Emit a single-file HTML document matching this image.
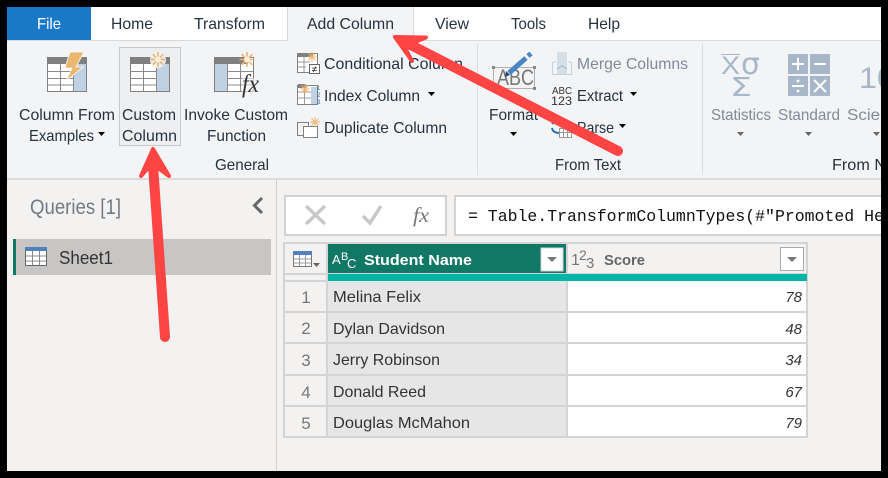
<!DOCTYPE html>
<html><head><meta charset="utf-8"><title>Add Column</title>
<style>
html,body{margin:0;padding:0;background:#000}
svg{display:block}
text{font-family:"Liberation Sans",sans-serif;font-size:16px;fill:#25323f}
.g{fill:#7f8b99}
.m{font-family:"Liberation Mono",monospace;font-size:16.500px;fill:#111}
.n{font-size:17px;fill:#777;text-anchor:middle}
.c{font-size:16px;fill:#333}
.s{font-size:15px;font-style:italic;fill:#333;text-anchor:end}
.fx{font-family:"Liberation Serif",serif;font-style:italic}
</style></head><body>
<svg xmlns="http://www.w3.org/2000/svg" width="888" height="478" viewBox="0 0 888 478">
<defs>
<clipPath id="pg"><rect x="7" y="7" width="874" height="464"/></clipPath>
</defs>
<rect width="888" height="478" fill="#000"/>
<g clip-path="url(#pg)">
<!-- tab bar -->
<rect x="7" y="7" width="874" height="34" fill="#fff"/>
<rect x="7" y="7" width="84" height="33" fill="#1a78c8"/>
<rect x="7" y="41" width="874" height="138" fill="#f3f4f6"/>
<rect x="7" y="40" width="874" height="1" fill="#d8d8d8"/>
<rect x="287" y="7" width="127" height="34.500" fill="#f3f4f6"/>
<rect x="287" y="7" width="1" height="34" fill="#d8d8d8"/>
<rect x="413" y="7" width="1" height="34" fill="#d8d8d8"/>
<text x="37" y="29" textLength="24" lengthAdjust="spacingAndGlyphs" style="fill:#fff">File</text>
<text x="111" y="29" textLength="42" lengthAdjust="spacingAndGlyphs">Home</text>
<text x="194" y="29" textLength="71" lengthAdjust="spacingAndGlyphs">Transform</text>
<text x="307" y="29" textLength="87" lengthAdjust="spacingAndGlyphs">Add Column</text>
<text x="435" y="29" textLength="34" lengthAdjust="spacingAndGlyphs">View</text>
<text x="511" y="29" textLength="35" lengthAdjust="spacingAndGlyphs">Tools</text>
<text x="588" y="29" textLength="32" lengthAdjust="spacingAndGlyphs">Help</text>

<!-- ribbon -->
<rect x="119.500" y="47.500" width="61" height="98" fill="#eeeff1" stroke="#c8c8c8"/>
<rect x="477" y="44" width="1" height="131" fill="#dcdcdc"/>
<rect x="702" y="44" width="1" height="131" fill="#dcdcdc"/>
<rect x="7" y="178" width="874" height="2" fill="#dcdcdc"/>

<!-- Column from examples icon -->
<g>
<rect x="47.500" y="57.500" width="39" height="34" fill="#fff" stroke="#808080"/>
<rect x="47" y="57" width="40" height="7" fill="#7f7f7f"/>
<rect x="74" y="64" width="12" height="27" fill="#bfd1e3"/>
<path d="M47 71.500H74M47 78.500H74M47 85H74M60.500 64V91M73.500 64V91" stroke="#8a8a8a" fill="none"/>
<path d="M70 52H84L76 67H83L66 81L72 68H65Z" fill="#eab76f" stroke="#fff" stroke-width=".8"/>
</g>
<!-- Custom column icon -->
<g>
<rect x="130.500" y="57.500" width="39" height="34" fill="#fff" stroke="#808080"/>
<rect x="130" y="57" width="40" height="7" fill="#7f7f7f"/>
<rect x="157" y="64" width="12" height="27" fill="#bfd1e3"/>
<path d="M130 71.500H157M130 78.500H157M130 85H157M143.500 64V91M156.500 64V91" stroke="#8a8a8a" fill="none"/>
<circle cx="158" cy="60" r="8" fill="#f3f4f6" opacity=".9"/>
<path d="M158 52V67M150.500 59.500H165.500M152.700 54.200L163.300 64.800M163.300 54.200L152.700 64.800" stroke="#efb474" stroke-width="1.600"/>
<circle cx="158" cy="59.500" r="3" fill="#fbeeda"/>
</g>
<!-- Invoke icon -->
<g>
<rect x="214.500" y="57.500" width="39" height="34" fill="#fff" stroke="#808080"/>
<rect x="214" y="57" width="34" height="7" fill="#7f7f7f"/>
<rect x="215" y="64" width="12" height="27" fill="#bfd1e3"/>
<path d="M227 71.500H253M227 78.500H253M227 85H253M227.500 64V91M240.500 64V91" stroke="#8a8a8a" fill="none"/>
<path d="M247 52V67M239.500 59.500H254.500M241.700 54.200L252.300 64.800M252.300 54.200L241.700 64.800" stroke="#efb474" stroke-width="1.600"/>
<circle cx="247" cy="59.500" r="3" fill="#fbeeda"/>
<rect x="242" y="78" width="18" height="20" fill="#f3f4f6" opacity=".6"/>
<text class="fx" x="242" y="92" style="font-size:25px;fill:#333" textLength="17" lengthAdjust="spacingAndGlyphs">fx</text>
</g>
<text x="19" y="120" textLength="96" lengthAdjust="spacingAndGlyphs">Column From</text>
<text x="29" y="141" textLength="65" lengthAdjust="spacingAndGlyphs">Examples</text>
<path d="M98 132H105L101.500 136Z" fill="#000"/>
<text x="122" y="120" textLength="54" lengthAdjust="spacingAndGlyphs">Custom</text>
<text x="122" y="141" textLength="55" lengthAdjust="spacingAndGlyphs">Column</text>
<text x="184" y="120" textLength="104" lengthAdjust="spacingAndGlyphs">Invoke Custom</text>
<text x="207" y="141" textLength="59" lengthAdjust="spacingAndGlyphs">Function</text>
<text x="215" y="170" textLength="54" lengthAdjust="spacingAndGlyphs">General</text>

<!-- small icons -->
<g>
<rect x="297.500" y="53.500" width="20" height="19" fill="#fff" stroke="#808080"/>
<rect x="297" y="53" width="16" height="4" fill="#7f7f7f"/>
<path d="M298 62H310M298 67H306M304 57V72" stroke="#9a9a9a" fill="none"/>
<path d="M312 52V62M307 57H317M308.500 53.500L315.500 60.500M315.500 53.500L308.500 60.500" stroke="#efb474"/>
<rect x="309.500" y="64.500" width="10" height="9" fill="#fff" stroke="#666"/>
<path d="M312 68H317M312 70.500H317M316 66.500L313 72" stroke="#333" stroke-width=".8" fill="none"/>

<rect x="297.500" y="85.500" width="20" height="19" fill="#fff" stroke="#808080"/>
<rect x="298" y="84" width="8" height="4" fill="#7f7f7f"/>
<rect x="311" y="87" width="6" height="17" fill="#bfd1e3"/>
<path d="M298 92H311M298 98H311M304.500 90V104" stroke="#9a9a9a" fill="none"/>
<path d="M305 84V94M300 89H310M301.500 85.500L308.500 92.500M308.500 85.500L301.500 92.500" stroke="#efb474"/>
<text x="317" y="90" style="font-size:6px;fill:#2c6fb5">1</text><text x="317" y="97" style="font-size:6px;fill:#2c6fb5">2</text><text x="317" y="104" style="font-size:6px;fill:#2c6fb5">3</text>

<rect x="297.500" y="122.500" width="11" height="13" fill="#f3f4f6" stroke="#808080"/>
<rect x="303.500" y="126.500" width="14" height="11" fill="#fff" stroke="#808080"/>
<path d="M315 117V127M310 122H320M311.500 118.500L318.500 125.500M318.500 118.500L311.500 125.500" stroke="#efb474"/>
</g>
<text x="324" y="69" textLength="139" lengthAdjust="spacingAndGlyphs">Conditional Column</text>
<text x="324" y="101" textLength="96" lengthAdjust="spacingAndGlyphs">Index Column</text>
<path d="M428 92H435L431.500 96Z" fill="#000"/>
<text x="324" y="133" textLength="123" lengthAdjust="spacingAndGlyphs">Duplicate Column</text>

<!-- Format icon -->
<g>
<rect x="493.500" y="67.500" width="41" height="21" fill="none" stroke="#b0b0b0"/>
<rect x="492" y="66" width="3" height="3" fill="#888"/><rect x="533" y="66" width="3" height="3" fill="#888"/>
<rect x="492" y="87" width="3" height="3" fill="#888"/><rect x="533" y="87" width="3" height="3" fill="#888"/>
<text x="497" y="85" textLength="37" lengthAdjust="spacingAndGlyphs" style="font-size:22px;fill:#787878">ABC</text>
<path d="M509 73L526 58" stroke="#4a86c2" stroke-width="5"/>
<path d="M528 56L531 53.500" stroke="#4a86c2" stroke-width="5"/>
<path d="M505 77L506 71L510 75Z" fill="#2a4a6a"/>
</g>
<text x="489" y="120" textLength="49" lengthAdjust="spacingAndGlyphs">Format</text>
<path d="M510 132H517L513.500 136Z" fill="#000"/>
<!-- Merge icon -->
<g>
<rect x="557" y="52" width="10" height="23" fill="#d4dfe8"/>
<path d="M552.500 62V74.500H571.500V62M552.500 62H556M571.500 62H568" fill="none" stroke="#c5d1df"/>
<path d="M557 69L562 66L567 69" fill="none" stroke="#9fb3c8"/>
</g>
<text x="577" y="69" textLength="111" lengthAdjust="spacingAndGlyphs" class="g">Merge Columns</text>
<text x="552" y="94" textLength="20" lengthAdjust="spacingAndGlyphs" style="font-size:10px;fill:#333">ABC</text>
<text x="551" y="105" textLength="21" lengthAdjust="spacingAndGlyphs" style="font-size:12px;fill:#333">123</text>
<text x="577" y="101" textLength="46" lengthAdjust="spacingAndGlyphs">Extract</text>
<path d="M630 92H637L633.500 96Z" fill="#000"/>
<g>
<path d="M561 123.500A6 6 0 0 0 552 124M552 128A6 6 0 0 0 561 132" fill="none" stroke="#2c6fb5" stroke-width="2"/>
<rect x="559.500" y="128.500" width="12" height="9" fill="#fff" stroke="#999"/>
<path d="M563.500 128V137M567.500 128V137M559 132.500H572" stroke="#999"/>
</g>
<text x="577" y="133" textLength="37" lengthAdjust="spacingAndGlyphs">Parse</text>
<path d="M619 124H626L622.500 128Z" fill="#000"/>
<text x="555" y="170" textLength="66" lengthAdjust="spacingAndGlyphs">From Text</text>

<!-- Stats -->
<rect x="721" y="54" width="19" height="1" fill="#a8b6ca"/>
<text x="721" y="74" textLength="19" lengthAdjust="spacingAndGlyphs" style="font-size:25px;fill:#a8b6ca">X</text>
<text x="741" y="74" textLength="19" lengthAdjust="spacingAndGlyphs" style="font-size:30px;fill:#a8b6ca;font-family:'DejaVu Sans',sans-serif">σ</text>
<text x="730" y="96" textLength="22" lengthAdjust="spacingAndGlyphs" style="font-size:26px;fill:#a8b6ca;font-family:'DejaVu Sans',sans-serif">Σ</text>
<text x="711" y="120" textLength="60" lengthAdjust="spacingAndGlyphs" class="g">Statistics</text>
<path d="M737 132H744L740.500 136Z" fill="#666"/>
<g>
<rect x="788" y="54" width="20" height="20" fill="#a8b6ca"/><rect x="810" y="54" width="20" height="20" fill="#a8b6ca"/>
<rect x="788" y="76" width="20" height="20" fill="#a8b6ca"/><rect x="810" y="76" width="20" height="20" fill="#a8b6ca"/>
<path d="M792 64H804M798 58V70M814 64H826M792 86H804M814 80L826 92M826 80L814 92" stroke="#fff" stroke-width="2"/>
<circle cx="798" cy="81" r="1.400" fill="#fff"/><circle cx="798" cy="91" r="1.400" fill="#fff"/>
</g>
<text x="778" y="120" textLength="62" lengthAdjust="spacingAndGlyphs" class="g">Standard</text>
<path d="M805 132H812L808.500 136Z" fill="#666"/>
<text x="859" y="88" textLength="36" lengthAdjust="spacingAndGlyphs" style="font-size:30px;fill:#a8b6ca">10</text>
<text x="847" y="120" textLength="68" lengthAdjust="spacingAndGlyphs" class="g">Scientific</text>
<path d="M873 132H880L876.500 136Z" fill="#666"/>
<text x="832" y="170" textLength="100" lengthAdjust="spacingAndGlyphs">From Number</text>

<!-- lower area -->
<rect x="7" y="180" width="874" height="291" fill="#f3f2f1"/>
<rect x="276" y="180" width="1" height="291" fill="#d2d0ce"/>
<text x="30" y="214" textLength="91" lengthAdjust="spacingAndGlyphs" style="font-size:21px;fill:#6f7b86">Queries [1]</text>
<path d="M262 198L254.500 205.500L262 213" fill="none" stroke="#666" stroke-width="3"/>
<rect x="13" y="239" width="258" height="36" fill="#c8c6c4"/>
<rect x="13" y="239" width="3" height="36" fill="#117865"/>
<rect x="25.500" y="247.500" width="21" height="18" fill="#fff" stroke="#666"/>
<rect x="25" y="247" width="22" height="4" fill="#4f81bd"/>
<path d="M26 256H46M26 261H46M32.500 251V265M39.500 251V265" stroke="#888"/>
<text x="59" y="264" textLength="54" lengthAdjust="spacingAndGlyphs" style="font-size:18px;fill:#333">Sheet1</text>

<!-- formula bar -->
<rect x="285" y="196" width="161" height="39" fill="#fff" stroke="#d2d2d2" stroke-width="2"/>
<rect x="455" y="196" width="440" height="39" fill="#fff" stroke="#d2d2d2" stroke-width="2"/>
<path d="M306 206L325 224M325 206L306 224" stroke="#c8c8c8" stroke-width="3.500"/>
<path d="M363 216L370 223L381 206" fill="none" stroke="#c8c8c8" stroke-width="3.500"/>
<text class="fx" x="413" y="222" textLength="16" lengthAdjust="spacingAndGlyphs" style="font-size:21px;fill:#777">fx</text>
<text class="m" x="468" y="221">= Table.TransformColumnTypes(#"Promoted Headers",</text>

<!-- table -->
<rect x="283" y="242" width="525" height="196" fill="#d4d4d4"/>
<rect x="285" y="244" width="41" height="29" fill="#f3f2f1"/>
<rect x="293.500" y="251.500" width="18" height="15" fill="#fff" stroke="#777"/>
<rect x="293" y="251" width="19" height="4" fill="#4f81bd"/>
<path d="M294 259H311M294 263H311M299.500 255V266M305.500 255V266" stroke="#999"/>
<path d="M313 263H320L316.500 267Z" fill="#666"/>
<rect x="328" y="244" width="238" height="29" fill="#117865"/>
<rect x="568" y="244" width="238" height="29" fill="#f3f2f1"/>
<rect x="285" y="275" width="41" height="5" fill="#f3f2f1"/>
<rect x="328" y="274" width="479" height="7" fill="#00b5a5"/>
<text x="332" y="264" style="font-size:13px;fill:#fff">A</text>
<text x="341" y="260" style="font-size:11px;fill:#fff">B</text>
<text x="347" y="268" style="font-size:13px;fill:#fff">C</text>
<text x="364" y="265" textLength="108" lengthAdjust="spacingAndGlyphs" style="font-size:15px;font-weight:bold;fill:#fff">Student Name</text>
<rect x="541" y="248" width="22" height="23" fill="#fff" stroke="#d4d4d4"/>
<path d="M547 257H557L552 262Z" fill="#777"/>
<text x="571" y="265" style="font-size:16px;fill:#777">1</text>
<text x="579" y="260" style="font-size:14px;fill:#777">2</text>
<text x="586" y="268" style="font-size:15px;fill:#777">3</text>
<text x="604" y="265" textLength="41" lengthAdjust="spacingAndGlyphs" style="font-size:15px;font-weight:bold;fill:#666">Score</text>
<rect x="780.500" y="247.500" width="23" height="23" fill="#fff" stroke="#aaa"/>
<path d="M787 257H797L792 262Z" fill="#777"/>

<!-- rows -->
<g fill="#f3f2f1">
<rect x="285" y="282" width="41" height="29"/><rect x="285" y="313" width="41" height="29"/><rect x="285" y="344" width="41" height="30"/><rect x="285" y="376" width="41" height="29"/><rect x="285" y="407" width="41" height="29"/>
</g>
<g fill="#e6e6e6">
<rect x="328" y="281" width="238" height="30"/><rect x="328" y="313" width="238" height="29"/><rect x="328" y="344" width="238" height="30"/><rect x="328" y="376" width="238" height="29"/><rect x="328" y="407" width="238" height="29"/>
</g>
<g fill="#fff">
<rect x="568" y="281" width="238" height="30"/><rect x="568" y="313" width="238" height="29"/><rect x="568" y="344" width="238" height="30"/><rect x="568" y="376" width="238" height="29"/><rect x="568" y="407" width="238" height="29"/>
</g>
<text class="n" x="306" y="303">1</text><text class="n" x="306" y="334">2</text><text class="n" x="306" y="366">3</text><text class="n" x="306" y="398">4</text><text class="n" x="306" y="429">5</text>
<text class="c" x="333" y="302" textLength="88" lengthAdjust="spacingAndGlyphs">Melina Felix</text>
<text class="c" x="333" y="334" textLength="112" lengthAdjust="spacingAndGlyphs">Dylan Davidson</text>
<text class="c" x="333" y="365" textLength="107" lengthAdjust="spacingAndGlyphs">Jerry Robinson</text>
<text class="c" x="333" y="397" textLength="93" lengthAdjust="spacingAndGlyphs">Donald Reed</text>
<text class="c" x="333" y="428" textLength="137" lengthAdjust="spacingAndGlyphs">Douglas McMahon</text>
<text class="s" x="802" y="302">78</text><text class="s" x="802" y="334">48</text><text class="s" x="802" y="365">34</text><text class="s" x="802" y="397">67</text><text class="s" x="802" y="428">79</text>

<!-- red arrows -->
<path d="M165 337L153 165" stroke="#ff4444" stroke-width="10" stroke-linecap="round" fill="none"/>
<path d="M153 149L169 176L158 168H148L141 176Z" fill="#ff4444" stroke="#ff4444" stroke-width="4" stroke-linejoin="round"/>
<path d="M618 151L405 42" stroke="#ff4444" stroke-width="10" stroke-linecap="round" fill="none"/>
<path d="M395 37L426 37.500L412 43L406 50L412 61Z" fill="#ff4444" stroke="#ff4444" stroke-width="4" stroke-linejoin="round"/>
</g>
</svg>
</body></html>
